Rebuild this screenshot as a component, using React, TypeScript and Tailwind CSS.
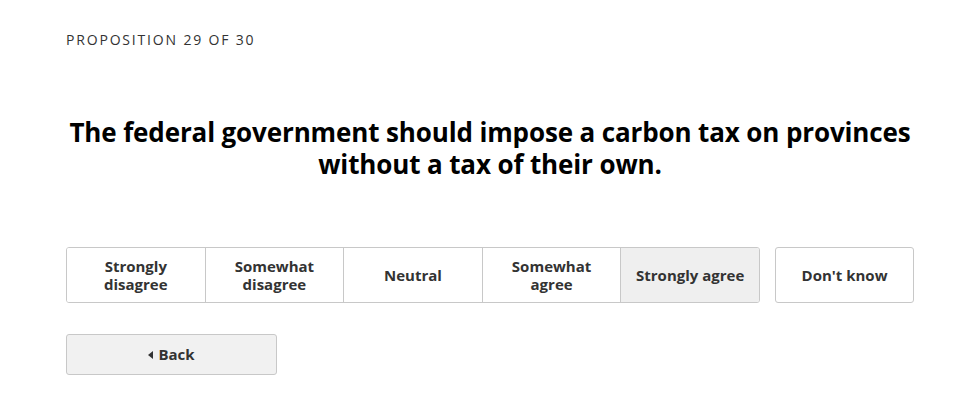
import { useState } from "react";

const options = [
    ["Strongly", "disagree"],
    ["Somewhat", "disagree"],
    ["Neutral"],
    ["Somewhat", "agree"],
    ["Strongly agree"],
];

export default function App() {
    const [selected, setSelected] = useState(4);

    return (
        <div className="w-[980px] h-[400px] bg-white text-[#222] font-['Open_Sans',sans-serif]">
            <div className="mx-[66px] pt-[31px]">
                <p className="text-[14px] tracking-[0.13em] text-[#333] leading-[18px]">PROPOSITION 29 OF 30</p>

                <h1 className="mt-[67px] text-center text-[26px] font-bold leading-[32px] text-black tracking-[-0.005em]">
                    The federal government should impose a carbon tax on provinces
                    <br />
                    without a tax of their own.
                </h1>

                <div className="mt-[67px] flex gap-[15px]">
                    <div className="flex w-[694px] h-[56px] border border-[#c8c8c8] rounded-[3px] overflow-hidden">
                        {options.map((lines, i) => (
                            <button
                                key={i}
                                onClick={() => setSelected(i)}
                                className={
                                    "flex-1 flex flex-col items-center justify-center text-[15px] font-bold leading-[18px] text-[#333] " +
                                    (i > 0 ? "border-l border-[#c8c8c8] " : "") +
                                    (selected === i ? "bg-[#efefef] text-[#111]" : "bg-white")
                                }
                            >
                                {lines.map((l) => (
                                    <span key={l}>{l}</span>
                                ))}
                            </button>
                        ))}
                    </div>
                    <button className="w-[139px] h-[56px] border border-[#c8c8c8] rounded-[3px] bg-white text-[15px] font-bold text-[#333]">
                        Don't know
                    </button>
                </div>

                <button className="mt-[31px] w-[211px] h-[41px] flex items-center justify-center gap-[4px] bg-[#f1f1f1] border border-[#c8c8c8] rounded-[3px] text-[15px] font-bold text-[#333]">
                    <svg width="6" height="8" viewBox="0 0 6 8">
                        <path d="M5 0 L0 4 L5 8 Z" fill="#333" />
                    </svg>
                    Back
                </button>
            </div>
        </div>
    );
}
